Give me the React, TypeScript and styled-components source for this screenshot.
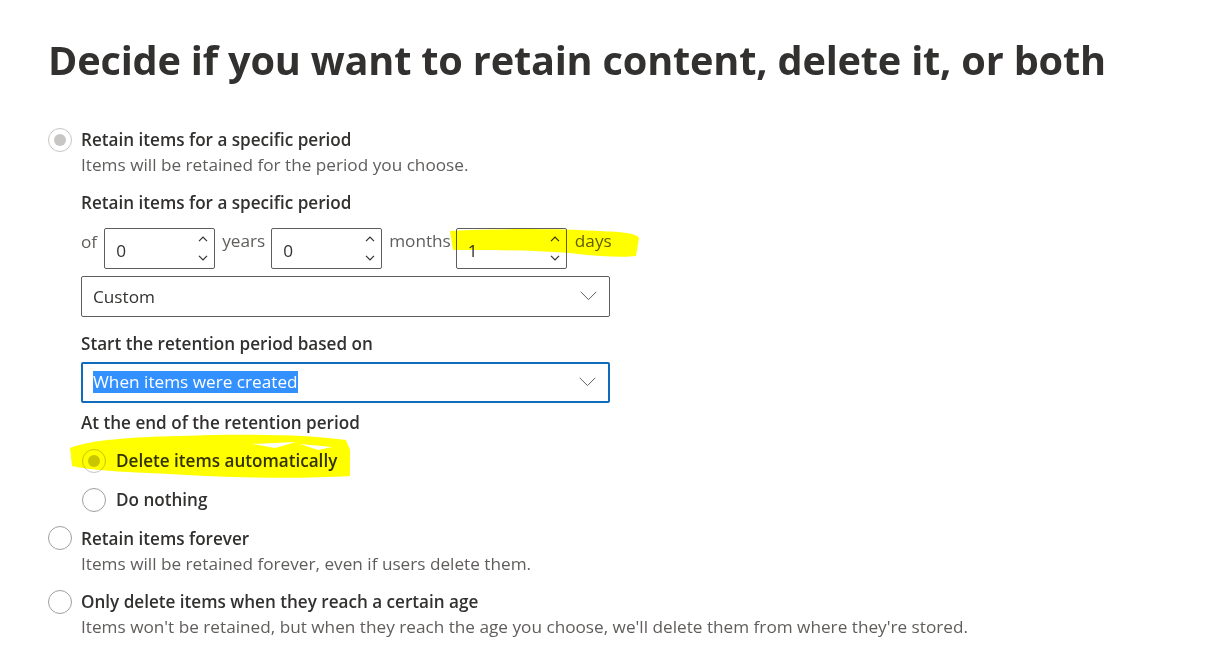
import React from 'react';
import styled, { createGlobalStyle } from 'styled-components';

const GlobalStyle = createGlobalStyle`
  html, body {
    margin: 0;
    padding: 0;
    background: #ffffff;
  }
  body {
    font-family: 'Open Sans', 'Noto Sans', 'Liberation Sans', sans-serif;
    color: #323130;
  }
`;

const Page = styled.div`
  position: relative;
  width: 1224px;
  height: 667px;
  overflow: hidden;
  padding: 0 0 0 48px;
  box-sizing: border-box;
`;

const Title = styled.h1`
  margin: 0;
  padding-top: 35px;
  font-size: 39.7px;
  line-height: 50px;
  font-weight: 700;
  color: #323130;
  letter-spacing: -0.2px;
`;

const Options = styled.div`
  display: flex;
  flex-direction: column;
  gap: 13.5px;
  margin-top: 42px;
`;

const Option = styled.div`
  display: grid;
  grid-template-columns: 24px 1fr;
  column-gap: 9px;
`;

const Circle = styled.span<{ $checked?: boolean; $disabled?: boolean }>`
  width: 24px;
  height: 24px;
  box-sizing: border-box;
  border-radius: 50%;
  border: 1px solid ${p => (p.$disabled ? '#c8c6c4' : '#a19f9d')};
  display: flex;
  align-items: center;
  justify-content: center;
  margin-top: 0.5px;
  background: #fff;

  &::after {
    content: '';
    display: ${p => (p.$checked ? 'block' : 'none')};
    width: 12px;
    height: 12px;
    border-radius: 50%;
    background: #c8c6c4;
  }
`;

const Body = styled.div`
  display: flex;
  flex-direction: column;
`;

const Label = styled.div`
  font-size: 17.1px;
  line-height: 25px;
  font-weight: 600;
  color: #323130;
`;

const Desc = styled.div`
  font-size: 17.2px;
  line-height: 25px;
  color: #605e5c;
`;

const SubHead = styled(Label)<{ $gap: number }>`
  margin-top: ${p => p.$gap}px;
`;

const SpinRow = styled.div`
  display: flex;
  align-items: flex-start;
  margin-top: 12.5px;
  font-size: 17.2px;
  color: #605e5c;
`;

const Unit = styled.span<{ $l: number; $r: number; $top?: number }>`
  line-height: 25px;
  margin: ${p => p.$top || 0}px ${p => p.$r}px 0 ${p => p.$l}px;
`;

const SpinBox = styled.div`
  width: 111px;
  height: 41px;
  box-sizing: border-box;
  border: 1px solid #605e5c;
  border-radius: 2px;
  display: flex;
  align-items: center;
  justify-content: space-between;
  padding: 4px 6px 0 11px;
  color: #323130;
  background: #fff;
  font-size: 17.2px;
`;

const Arrows = styled.div`
  display: flex;
  flex-direction: column;
  gap: 13px;
  margin-top: -4px;
`;

const Dropdown = styled.div<{ $focused?: boolean; $gap: number }>`
  width: 529px;
  height: 41px;
  box-sizing: border-box;
  border: ${p => (p.$focused ? '2px solid #0f6cbd' : '1px solid #605e5c')};
  border-radius: 2px;
  margin-top: ${p => p.$gap}px;
  display: flex;
  align-items: center;
  justify-content: space-between;
  padding: 0 12px 0 ${p => (p.$focused ? 10 : 11)}px;
  font-size: 17.2px;
  color: #323130;
  background: #fff;
`;

const Selected = styled.span`
  background: #3390ff;
  color: #fff;
  line-height: 22px;
`;

const NestedList = styled.div`
  display: flex;
  flex-direction: column;
  gap: 14px;
  margin-top: 13px;
`;

const Nested = styled.div`
  display: grid;
  grid-template-columns: 24px 1fr;
  column-gap: 10px;
  margin-left: 1px;
`;

const Marker = styled.svg`
  position: absolute;
  left: 0;
  top: 0;
  pointer-events: none;
  mix-blend-mode: multiply;
`;

const Chevron = ({ up }: { up?: boolean }) => (
  <svg width="10" height="6" viewBox="0 0 10 6" fill="none">
    <path
      d={up ? 'M1 5.2 L5 1 L9 5.2' : 'M1 0.8 L5 5 L9 0.8'}
      stroke="#323130"
      strokeWidth="1.2"
    />
  </svg>
);

const Caret = () => (
  <svg width="17" height="10" viewBox="0 0 17 10" fill="none">
    <path d="M0.7 0.8 L8.5 8.6 L16.3 0.8" stroke="#605e5c" strokeWidth="1" />
  </svg>
);

const Spin = ({ value }: { value: string }) => (
  <SpinBox>
    <span>{value}</span>
    <Arrows>
      <Chevron up />
      <Chevron />
    </Arrows>
  </SpinBox>
);

const Radio = ({
  label,
  checked,
  disabled,
  children,
}: {
  label: string;
  checked?: boolean;
  disabled?: boolean;
  children?: React.ReactNode;
}) => (
  <Option>
    <Circle $checked={checked} $disabled={disabled} />
    <Body>
      <Label>{label}</Label>
      {children}
    </Body>
  </Option>
);

export default function App() {
  return (
    <>
      <GlobalStyle />
      <Page>
        <Title>Decide if you want to retain content, delete it, or both</Title>
        <Options>
          <Radio label="Retain items for a specific period" checked disabled>
            <Desc>Items will be retained for the period you choose.</Desc>
            <SubHead $gap={13}>Retain items for a specific period</SubHead>
            <SpinRow>
              <Unit $l={0} $r={7} $top={1}>of</Unit>
              <Spin value="0" />
              <Unit $l={7} $r={6}>years</Unit>
              <Spin value="0" />
              <Unit $l={7} $r={5}>months</Unit>
              <Spin value="1" />
              <Unit $l={8} $r={0}>days</Unit>
            </SpinRow>
            <Dropdown $gap={7}>
              <span>Custom</span>
              <Caret />
            </Dropdown>
            <SubHead $gap={14.5}>Start the retention period based on</SubHead>
            <Dropdown $focused $gap={5.5}>
              <Selected>When items were created</Selected>
              <Caret />
            </Dropdown>
            <SubHead $gap={7.5}>At the end of the retention period</SubHead>
            <NestedList>
              <Nested>
                <Circle $checked $disabled />
                <Label>Delete items automatically</Label>
              </Nested>
              <Nested>
                <Circle />
                <Label>Do nothing</Label>
              </Nested>
            </NestedList>
          </Radio>
          <Radio label="Retain items forever">
            <Desc>Items will be retained forever, even if users delete them.</Desc>
          </Radio>
          <Radio label="Only delete items when they reach a certain age">
            <Desc>
              Items won't be retained, but when they reach the age you choose, we'll delete them
              from where they're stored.
            </Desc>
          </Radio>
        </Options>
        <Marker width="1224" height="667" viewBox="0 0 1224 667">
          <path
            d="M450 231 C500 228 560 229 600 231 C622 232 636 233 639 238 L636 256 C620 258 595 256 570 253 C530 250 485 250 453 250 Z"
            fill="#ffff00"
          />
          <path
            d="M70 448 C90 440 130 437 180 436 C240 434 300 434 346 440 L350 450 L350 476 C300 479 230 478 170 474 C120 472 90 470 72 466 Z"
            fill="#ffff00"
          />
          <path d="M252 444 L296 442 L275 448 Z" fill="#ffffff" />
          <path d="M300 444 L332 447 L318 450 Z" fill="#ffffff" />
        </Marker>
      </Page>
    </>
  );
}
